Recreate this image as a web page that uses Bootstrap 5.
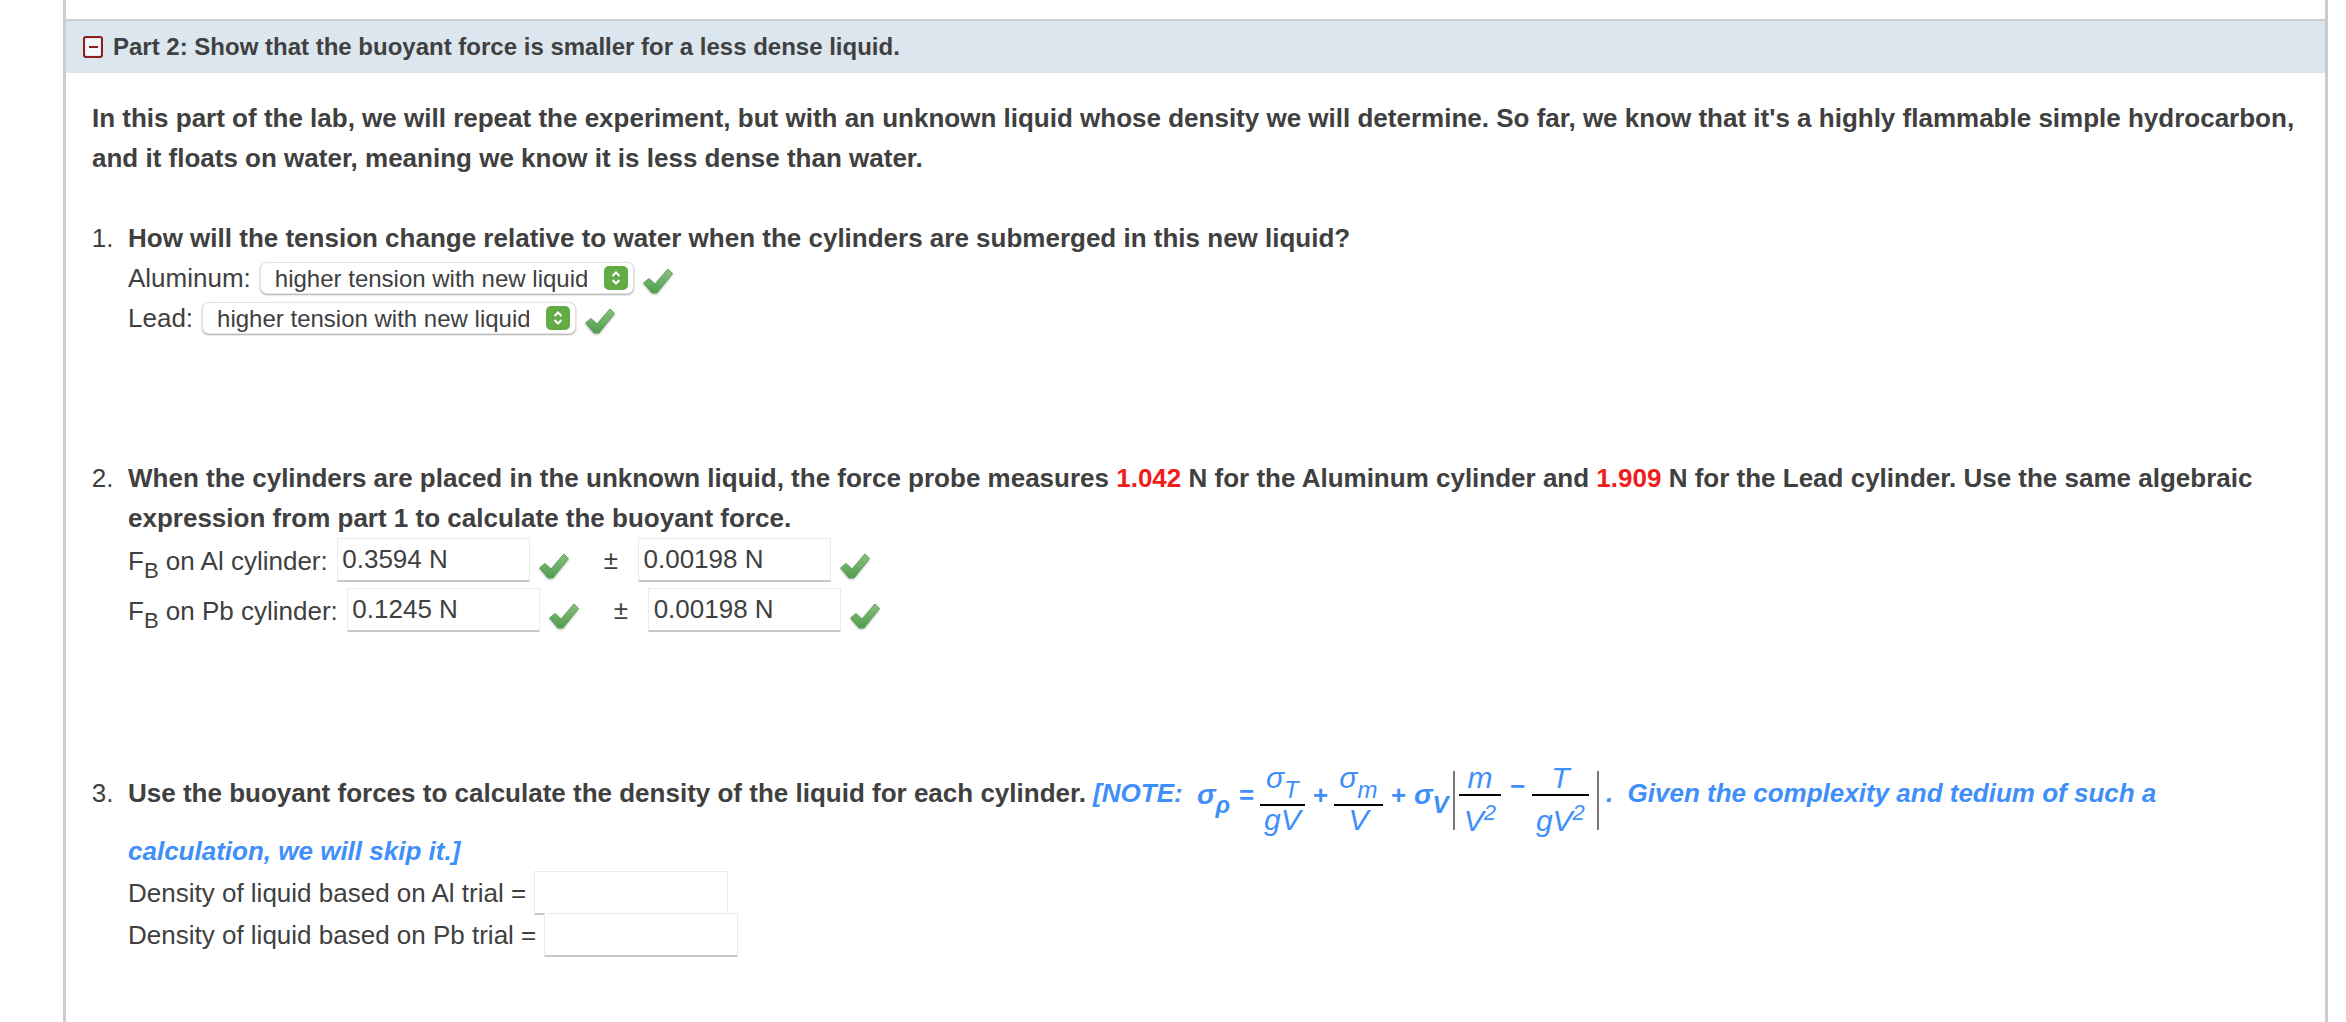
<!DOCTYPE html>
<html lang="en"><head><meta charset="utf-8"><title>Part 2</title>
<link rel="stylesheet" href="https://cdn.jsdelivr.net/npm/bootstrap@5.3.0/dist/css/bootstrap.min.css">
<style>
html,body{height:100%;background:#fff;overflow:hidden}
body{font-family:"Liberation Sans",Arial,sans-serif;font-size:26px;line-height:40px;color:#404040}
.page-frame{margin-left:63px;width:2265px;height:1022px;border-left:3px solid #ccc;border-right:3px solid #ccc;padding-top:19px;overflow:hidden}
.part-head{height:54px;background:#dce6ef;border-top:2px solid #ccc;padding-left:17px;gap:10px;font-size:24px;font-weight:700;line-height:1}
.minus-box{width:20px;height:22px;border:2px solid #8c1f1f;border-radius:3px;background:#f4f7fa;box-shadow:inset 0 0 1px #c55}
.minus-box i{display:block;width:9px;height:2px;background:#8c1f1f}
.lab-body{padding:25px 20px 0 26px}
.lab-intro{margin:0 0 40px}
.lab-list{margin:0;padding-left:36px}
.lab-list li::marker{content:counter(list-item) ".\00a0\00a0"}
.item-one{height:240px}
.item-two{height:304px}
.ctl-row{height:40px;gap:9px}
.ctl-row-tall{height:50px;gap:0}
.first-tall{margin-top:-3px}
.lab-red{color:#f01d1d}
.pick{height:32px;border:1px solid #e2e2e2;border-radius:7px;box-shadow:0 1px 2px #aaa;padding:0 5px 0 14px;background:#fff}
.pick .form-select{appearance:none;background:none;border:0;padding:1px 0 0;width:312px;flex:none;height:30px;font:24px/29px "Liberation Sans",Arial,sans-serif;color:#404040;box-shadow:none}
.stepper{flex:none;width:24px;height:24px;margin-left:17px;border-radius:5px;background:#62ab45}
.stepper svg{display:block}
.val-box.form-control{width:193px;height:44px;min-height:0;flex:none;border:1px solid #ebebeb;border-bottom:2px solid #c8c8c8;border-radius:0;padding:0 4.500px;font:26px/40px "Liberation Sans",Arial,sans-serif;color:#404040;background:#fff;box-shadow:none}
.tick{flex:none;width:30px;height:26px;margin-top:6px;filter:blur(.35px) drop-shadow(0 1px 1px #bbb)}
.ctl-row-tall .tick{margin-left:9px;margin-top:12px}
.pm{margin:0 20px 0 35px}
.fb-label{margin-right:9px;padding-top:2px}
.fb-label sub{font-size:.85em;bottom:-.35em}
.note{color:#3f8ffa;font-style:italic}
.eqn{display:inline-flex;align-items:center;vertical-align:middle;height:72px;margin:-5px 0 -5px 7px;font-style:italic;font-weight:400;line-height:30px}
.frac{display:flex;flex-direction:column;align-self:flex-start;flex:none;margin-top:5px;font-size:30px;text-align:center}
.frac span{display:block;white-space:nowrap}
.frac sub{font-size:24px;bottom:-10px}
.frac sup{font-size:22px;top:-11px}
.frac .up{height:42px;line-height:27px;border-bottom:2px solid #000}
.frac .down{height:30px;margin-top:-1px}
.w1{width:45px}.w2{width:49px}.w3{width:42px}.w4{width:57px}
.sigma{flex:none;font-weight:700;font-size:28px}
.sigma sub{font-size:24px;font-weight:700;bottom:-9px}
.w-rho{width:36px}.w-vee{width:34px}
.opr{flex:none;width:14px;text-align:center;font-style:normal;font-weight:700;font-size:26px}
.op-eq{margin:0 6px;width:15px}
.op-a{margin:0 7px 0 8px}
.op-b{margin:0 9px 0 8px}
.op-c{margin:0 8px 0 9px}
.abs{flex:none;align-self:flex-start;display:flex;align-items:flex-start;height:59px;margin:12px 0 0 5px;padding:0 8px 0 4px;border-left:2px solid #777;border-right:2px solid #777}
.abs .frac{margin-top:-6px}
.abs .frac .up{height:31px;line-height:26px}
.abs .frac .down{margin-top:10px}
.item-three-line{line-height:62px;height:62px;white-space:nowrap}
.skip-line{height:41px;margin-top:6px;line-height:42px}
.dens-row{height:42px}
.dens-first{height:43px}
.dens-box.form-control{width:194px;height:44px;margin-left:8px}
.dot-after{margin-left:7px}
</style></head>
<body>
<svg width="0" height="0" class="d-block"><defs>
<linearGradient id="gk" x1="0" y1="0" x2="0" y2="1"><stop offset="0" stop-color="#8cc080"/><stop offset="1" stop-color="#4f9c4e"/></linearGradient>
<symbol id="tk" viewBox="0 0 30 26"><path d="M.5 15 6 10.500 12 16 25 1 29.500 5.500 14 25 9 25Z" fill="url(#gk)" stroke="#62a45e" stroke-width="1" stroke-linejoin="round"/></symbol>
<symbol id="st" viewBox="0 0 24 24"><path d="M8.500 10 12 6.500 15.500 10M8.500 14 12 17.500 15.500 14" fill="none" stroke="#fff" stroke-width="2"/></symbol>
</defs></svg>
<div class="page-frame">
<div class="part-head d-flex align-items-center">
<span class="minus-box d-flex align-items-center justify-content-center"><i></i></span>
<span>Part 2: Show that the buoyant force is smaller for a less dense liquid.</span>
</div>
<div class="lab-body">
<p class="lab-intro fw-bold">In this part of the lab, we will repeat the experiment, but with an unknown liquid whose density we will determine. So far, we know that it's a highly flammable simple hydrocarbon, and it floats on water, meaning we know it is less dense than water.</p>
<ol class="lab-list">
<li class="item-one">
<div class="fw-bold">How will the tension change relative to water when the cylinders are submerged in this new liquid?</div>
<div class="ctl-row d-flex align-items-center"><span>Aluminum:</span>
<span class="pick d-flex align-items-center"><select class="form-select" aria-label="Aluminum"><option>higher tension with new liquid</option></select><span class="stepper"><svg width="24" height="24"><use href="#st"/></svg></span></span>
<svg class="tick"><use href="#tk"/></svg></div>
<div class="ctl-row d-flex align-items-center"><span>Lead:</span>
<span class="pick d-flex align-items-center"><select class="form-select" aria-label="Lead"><option>higher tension with new liquid</option></select><span class="stepper"><svg width="24" height="24"><use href="#st"/></svg></span></span>
<svg class="tick"><use href="#tk"/></svg></div>
</li>
<li class="item-two">
<div class="fw-bold">When the cylinders are placed in the unknown liquid, the force probe measures <span class="lab-red">1.042</span> N for the Aluminum cylinder and <span class="lab-red">1.909</span> N for the Lead cylinder. Use the same algebraic expression from part 1 to calculate the buoyant force.</div>
<div class="ctl-row ctl-row-tall first-tall d-flex align-items-center"><span class="fb-label">F<sub>B</sub> on Al cylinder:</span>
<input class="form-control val-box" value="0.3594 N" aria-label="FB Al"><svg class="tick"><use href="#tk"/></svg><span class="pm">±</span>
<input class="form-control val-box" value="0.00198 N" aria-label="err Al"><svg class="tick"><use href="#tk"/></svg></div>
<div class="ctl-row ctl-row-tall d-flex align-items-center"><span class="fb-label">F<sub>B</sub> on Pb cylinder:</span>
<input class="form-control val-box" value="0.1245 N" aria-label="FB Pb"><svg class="tick"><use href="#tk"/></svg><span class="pm">±</span>
<input class="form-control val-box" value="0.00198 N" aria-label="err Pb"><svg class="tick"><use href="#tk"/></svg></div>
</li>
<li>
<div class="item-three-line"><b>Use the buoyant forces to calculate the density of the liquid for each cylinder.</b> <b class="note">[NOTE:</b>
<span class="eqn note"><span class="sigma w-rho">σ<sub>ρ</sub></span><span class="opr op-eq">=</span>
<span class="frac w1"><span class="up">σ<sub>T</sub></span><span class="down">gV</span></span><span class="opr op-a">+</span>
<span class="frac w2"><span class="up">σ<sub>m</sub></span><span class="down">V</span></span><span class="opr op-b">+</span>
<span class="sigma w-vee">σ<sub>V</sub></span>
<span class="abs"><span class="frac w3"><span class="up">m</span><span class="down">V<sup>2</sup></span></span><span class="opr op-c">−</span><span class="frac w4"><span class="up">T</span><span class="down">gV<sup>2</sup></span></span></span>
</span><b class="note dot-after">.&nbsp; Given the complexity and tedium of such a</b></div>
<div class="skip-line"><b class="note">calculation, we will skip it.]</b></div>
<div class="dens-row dens-first d-flex align-items-center"><span>Density of liquid based on Al trial =</span><input class="form-control val-box dens-box" aria-label="Al density"></div>
<div class="dens-row d-flex align-items-center"><span>Density of liquid based on Pb trial =</span><input class="form-control val-box dens-box" aria-label="Pb density"></div>
</li>
</ol>
</div>
</div>
</body></html>
